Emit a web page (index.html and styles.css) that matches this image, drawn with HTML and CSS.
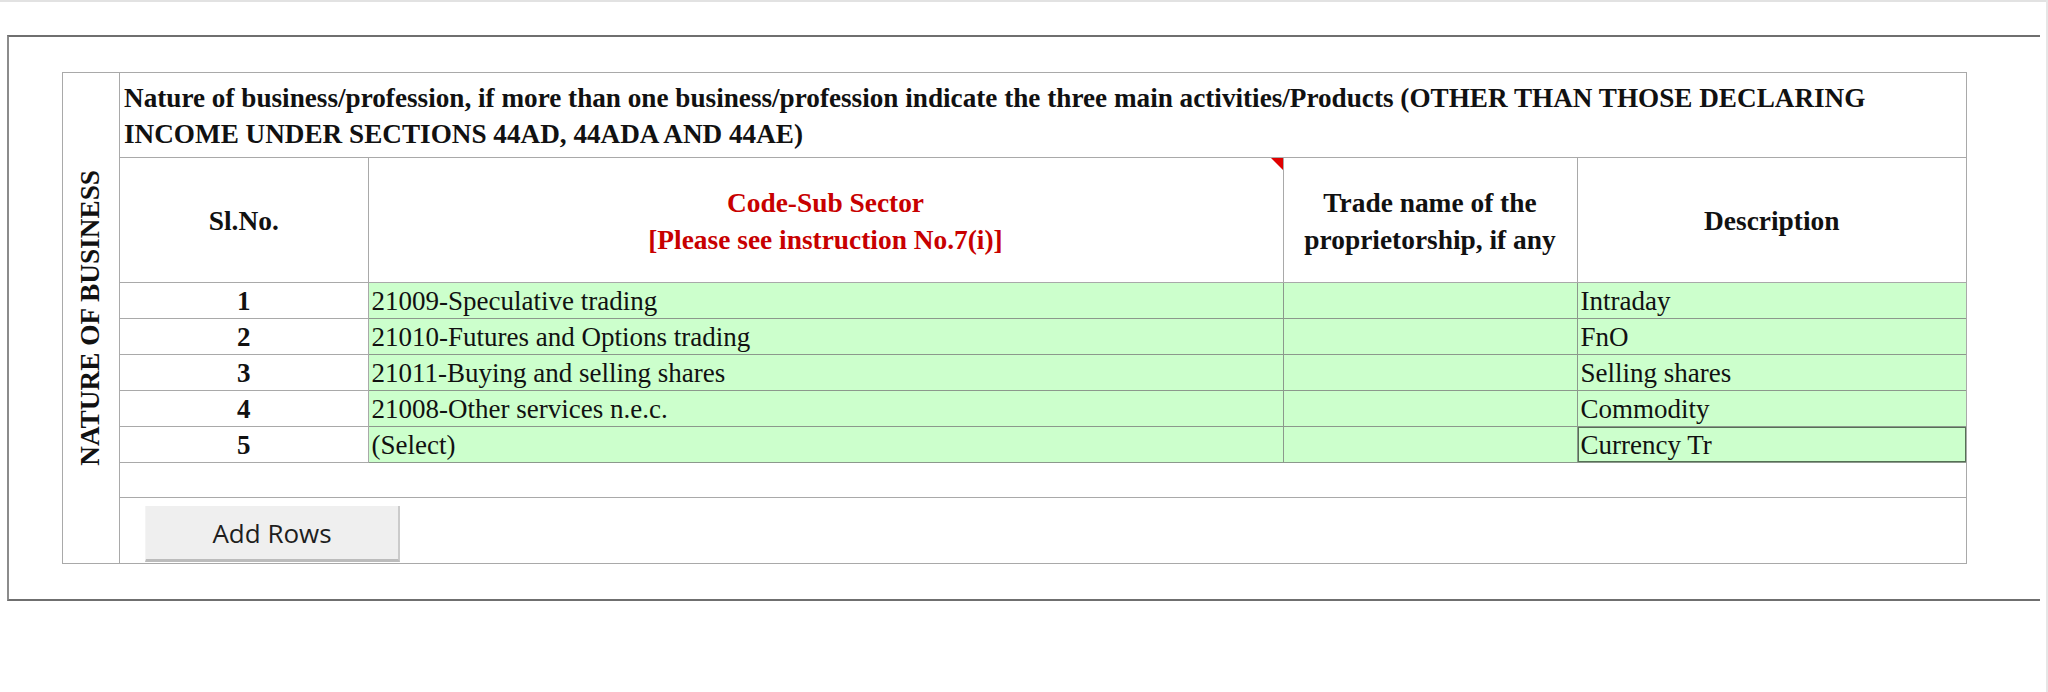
FILE: index.html
```html
<!DOCTYPE html>
<html>
<head>
<meta charset="utf-8">
<title>Nature of Business</title>
<link rel="stylesheet" href="styles.css">
</head>
<body>
<div class="topline"></div>
<div class="panel">
  <div class="form">
    <div class="side"><span class="vert">NATURE OF BUSINESS</span></div>
    <div class="main">
      <div class="title">Nature of business/profession, if more than one business/profession indicate the three main activities/Products (OTHER THAN THOSE DECLARING INCOME UNDER SECTIONS 44AD, 44ADA AND 44AE)</div>
      <table class="grid">
        <colgroup>
          <col class="c-sl"><col class="c-code"><col class="c-trade"><col class="c-desc">
        </colgroup>
        <tr class="head">
          <th>Sl.No.</th>
          <th class="red">Code-Sub Sector<br>[Please see instruction No.7(i)]<span class="flag"></span></th>
          <th>Trade name of the<br>proprietorship, if any</th>
          <th>Description</th>
        </tr>
        <tr class="row">
          <td class="num">1</td><td class="g">21009-Speculative trading</td><td class="g"></td><td class="g">Intraday</td>
        </tr>
        <tr class="row">
          <td class="num">2</td><td class="g">21010-Futures and Options trading</td><td class="g"></td><td class="g">FnO</td>
        </tr>
        <tr class="row">
          <td class="num">3</td><td class="g">21011-Buying and selling shares</td><td class="g"></td><td class="g">Selling shares</td>
        </tr>
        <tr class="row">
          <td class="num">4</td><td class="g">21008-Other services n.e.c.</td><td class="g"></td><td class="g">Commodity</td>
        </tr>
        <tr class="row">
          <td class="num">5</td><td class="g">(Select)</td><td class="g"></td><td class="g sel">Currency Tr</td>
        </tr>
      </table>
      <div class="blank"></div>
      <div class="btnrow"><button class="addbtn">Add Rows</button></div>
    </div>
  </div>
</div>
</body>
</html>
```

FILE: styles.css
```css
html, body {
  margin: 0;
  padding: 0;
  background: #ffffff;
}
body {
  width: 2046px;
  height: 692px;
  border-right: 2px solid #e6e6e6;
  font-family: "Liberation Serif", "Times New Roman", serif;
  color: #111;
  overflow: hidden;
}
.topline {
  height: 2px;
  background: #e2e2e2;
}
.panel {
  margin: 33px 6px 0 7px;
  border-top: 2px solid #6f6f6f;
  border-left: 2px solid #8c8c8c;
  border-bottom: 2px solid #6f6f6f;
  padding: 35px 0 35px 53px;
}
.form {
  width: 1905px;
  box-sizing: border-box;
  display: grid;
  grid-template-columns: 57px 1fr;
  border: 1px solid #a9a9a9;
}
.side {
  border-right: 1px solid #a9a9a9;
  display: flex;
  align-items: center;
  justify-content: center;
}
.vert {
  writing-mode: vertical-rl;
  transform: rotate(180deg);
  font-weight: bold;
  font-size: 27.3px;
  white-space: nowrap;
  line-height: 1;
}
.main {
  display: flex;
  flex-direction: column;
}
.title {
  font-weight: bold;
  font-size: 27.2px;
  line-height: 36px;
  padding: 7px 4px 5px 4px;
  border-bottom: 1px solid #a9a9a9;
}
.grid {
  width: 100%;
  border-collapse: collapse;
  table-layout: fixed;
}
.c-sl { width: 248px; }
.c-code { width: 915px; }
.c-trade { width: 294px; }
.grid th, .grid td {
  border-right: 1px solid #a9a9a9;
  border-bottom: 1px solid #a9a9a9;
  padding: 0;
}
.grid th:last-child, .grid td:last-child {
  border-right: none;
}
.head th {
  height: 121px;
  font-size: 27.4px;
  font-weight: bold;
  line-height: 37px;
  text-align: center;
  vertical-align: middle;
  padding-top: 3px;
}
.head th.red {
  color: #c80000;
  position: relative;
}
.flag {
  position: absolute;
  top: 0;
  right: 0;
  width: 0;
  height: 0;
  border-top: 12px solid #e00000;
  border-left: 12px solid transparent;
}
.row td {
  height: 35px;
  font-size: 27px;
  line-height: 30px;
  vertical-align: middle;
  white-space: nowrap;
  overflow: hidden;
}
.row td.num {
  text-align: center;
  font-weight: bold;
}
.row td.g {
  background: #ccffcc;
  padding-left: 3px;
  border-color: #8c988c;
}
.grid tr.row td.sel {
  box-shadow: inset 0 0 0 1px #557055;
}
.blank {
  height: 34px;
  border-bottom: 1px solid #a9a9a9;
}
.btnrow {
  height: 57px;
  padding: 8px 0 0 25px;
  display: flex;
  align-items: flex-start;
}
.addbtn {
  width: 255px;
  height: 56px;
  box-sizing: border-box;
  background: #efefef;
  border: none;
  border-left: 1px solid #f4f4f4;
  border-right: 2px solid #cbcbcb;
  border-bottom: 3px solid #bcbcbc;
  font-family: "Open Sans", "Noto Sans", sans-serif;
  font-size: 26px;
  color: #1e1e1e;
  padding: 0;
}
```
